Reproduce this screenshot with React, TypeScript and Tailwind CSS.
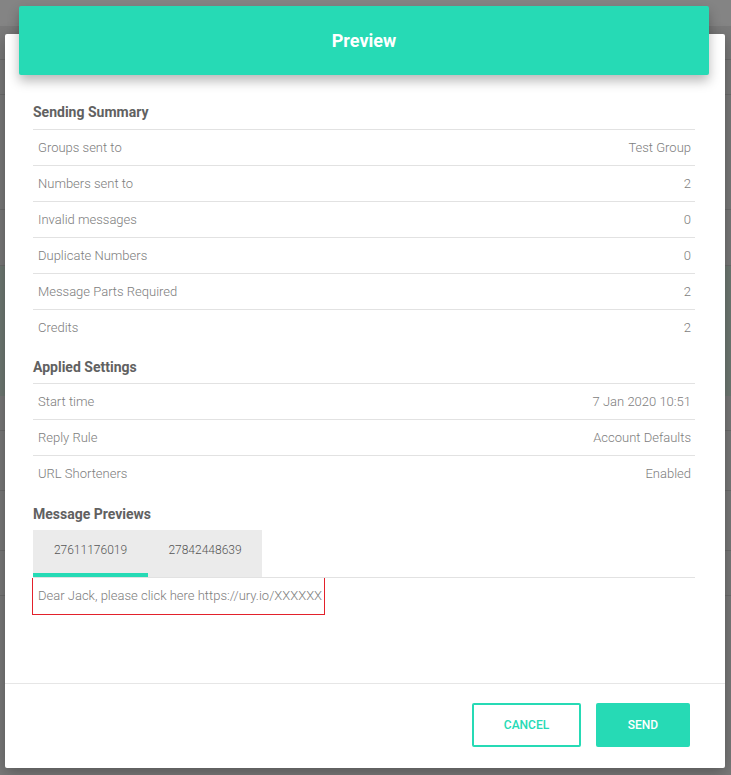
const GREEN = 'bg-[#26dab5]'

const summary = [
  ['Groups sent to', 'Test Group'],
  ['Numbers sent to', '2'],
  ['Invalid messages', '0'],
  ['Duplicate Numbers', '0'],
  ['Message Parts Required', '2'],
  ['Credits', '2'],
]

const settings = [
  ['Start time', '7 Jan 2020 10:51'],
  ['Reply Rule', 'Account Defaults'],
  ['URL Shorteners', 'Enabled'],
]

function Row({ label, value }: { label: string; value: string }) {
  return (
    <div className="flex h-[36px] items-center justify-between border-t border-[#e2e2e2] pl-[5px] pr-[4px] text-[13px] font-light text-[#7d7d7d]">
      <span>{label}</span>
      <span>{value}</span>
    </div>
  )
}

function SectionTitle({ children }: { children: string }) {
  return <h3 className="h-[20px] text-[14px] font-bold leading-[20px] text-[#616161]">{children}</h3>
}

export default function App() {
  return (
    <div
      className="relative h-[775px] w-[731px] overflow-hidden bg-[#7a7a7a]"
      style={{ fontFamily: 'Roboto, "Open Sans", sans-serif' }}
    >
      {/* page behind the overlay */}
      <div className="flex flex-col">
        <div className="h-[26px] bg-[#848484]" />
        <div className="h-[34px] border-b border-[#6d6d6d]" />
        <div className="h-[35px] border-b border-[#6d6d6d]" />
        <div className="h-[115px] border-b border-[#6d6d6d]" />
        <div className="h-[56px] border-b border-[#6d6d6d]" />
        <div className="h-[130px] bg-[#6f7a74]" />
        <div className="h-[35px] border-b border-[#6d6d6d]" />
        <div className="h-[60px] border-b border-[#6d6d6d]" />
        <div className="h-[60px] border-b border-[#6d6d6d]" />
        <div className="h-[45px] border-b border-[#6d6d6d]" />
      </div>

      {/* modal */}
      <div className="absolute left-[5px] top-[34px] flex h-[734px] w-[720px] flex-col rounded-[2px] bg-white shadow-[0_4px_16px_rgba(0,0,0,0.3)]">
        <div
          className={`${GREEN} -mt-[28px] ml-[14px] mr-[16px] flex h-[69px] items-center justify-center rounded-[2px] shadow-[0_6px_12px_rgba(0,0,0,0.28)]`}
        >
          <h2 className="text-[18px] font-bold text-white">Preview</h2>
        </div>

        <div className="flex flex-1 flex-col pl-[28px] pr-[30px] pt-[27px]">
          <SectionTitle>Sending Summary</SectionTitle>
          <div className="mt-[7px]">
            {summary.map(([l, v]) => (
              <Row key={l} label={l} value={v} />
            ))}
          </div>

          <div className="mt-[12px]">
            <SectionTitle>Applied Settings</SectionTitle>
          </div>
          <div className="mt-[6px]">
            {settings.map(([l, v]) => (
              <Row key={l} label={l} value={v} />
            ))}
          </div>

          <div className="mt-[13px]">
            <SectionTitle>Message Previews</SectionTitle>
          </div>
          <div className="mt-[6px] flex border-b border-[#e2e2e2]">
            <div className="flex bg-[#ebebeb]">
              <button className="relative flex h-[47px] w-[115px] items-center justify-center pb-[7px] text-[12px] font-light text-[#555]">
                27611176019
                <span className={`${GREEN} absolute bottom-0 left-0 h-[4px] w-full`} />
              </button>
              <button className="flex h-[47px] w-[114px] items-center justify-center pb-[7px] text-[12px] font-light text-[#555]">
                27842448639
              </button>
            </div>
          </div>
          <div className="-ml-px flex">
            <div className="flex h-[37px] items-center border border-t-0 border-[#e3212b] pl-[5px] pr-[2px] text-[13px] font-light text-[#7d7d7d]">
              Dear Jack, please click here https://ury.io/XXXXXX
            </div>
          </div>
        </div>

        <div className="flex h-[85px] items-start justify-end gap-[15px] border-t border-[#e6e6e6] pr-[35px] pt-[19px]">
          <button className="h-[44px] w-[109px] rounded-[2px] border-2 border-[#26dab5] text-[12px] font-medium text-[#26dab5]">
            CANCEL
          </button>
          <button className={`${GREEN} h-[44px] w-[94px] rounded-[2px] text-[12px] font-medium text-white`}>
            SEND
          </button>
        </div>
      </div>
    </div>
  )
}
